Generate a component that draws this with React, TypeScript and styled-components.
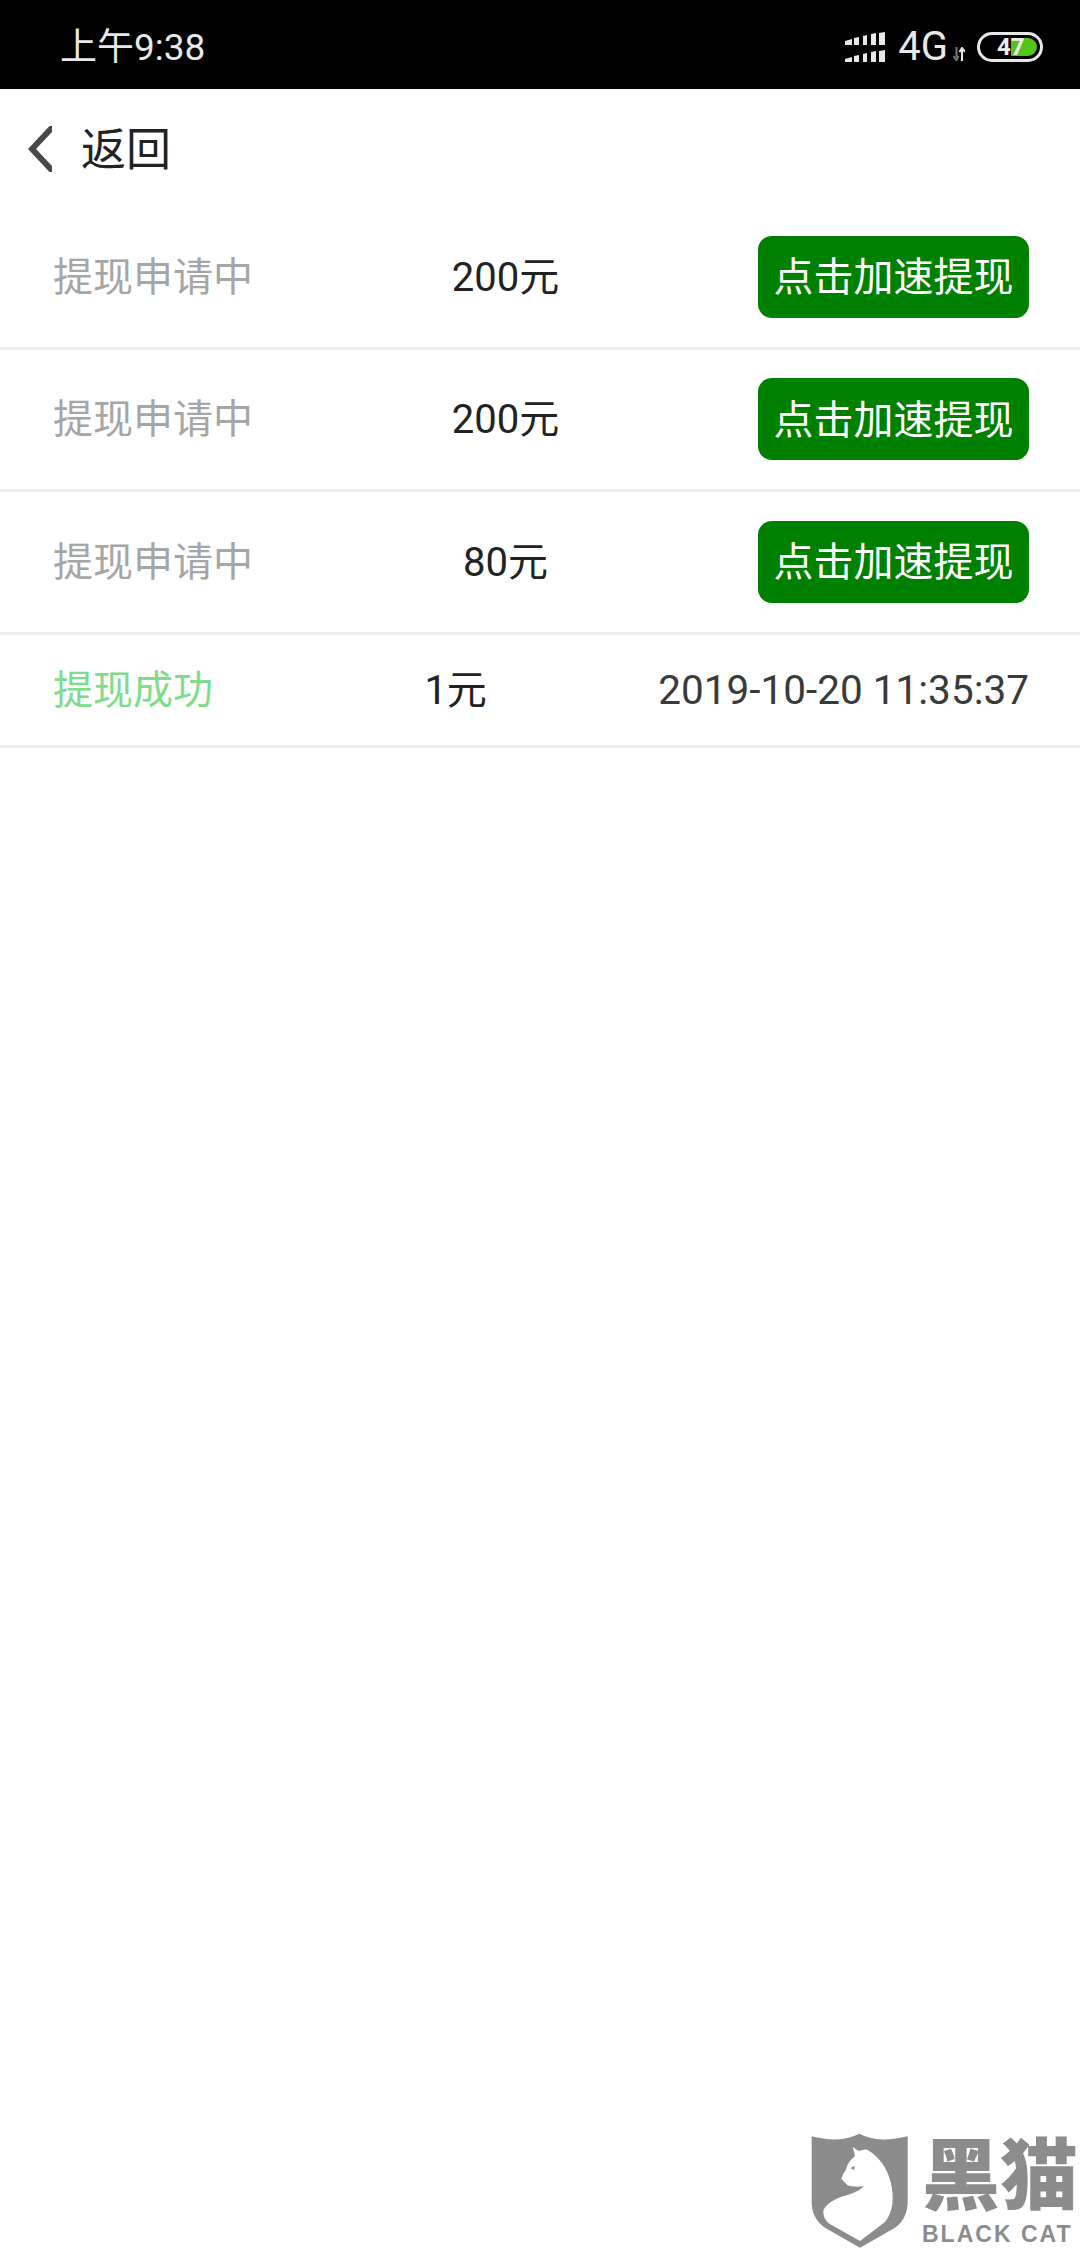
import React from 'react';
import styled, { createGlobalStyle } from 'styled-components';

const GlobalStyle = createGlobalStyle`
  html, body {
    margin: 0;
    padding: 0;
    background: #fff;
  }
  * {
    box-sizing: border-box;
  }
`;

const FONT = `Roboto, "Noto Sans CJK SC", sans-serif`;

const Page = styled.div`
  position: relative;
  width: 1080px;
  height: 2248px;
  overflow: hidden;
  background: #fff;
  font-family: ${FONT};
`;

// black system status bar
const StatusBar = styled.div`
  display: flex;
  align-items: center;
  justify-content: space-between;
  height: 89px;
  padding: 5px 37px 0 60px;
  background: #000;
  color: #e8e8e8;
`;

const Clock = styled.div`
  font-size: 37px;
  line-height: 1;
`;

const StatusIcons = styled.div`
  display: flex;
  align-items: center;
`;

const NetworkLabel = styled.span`
  font-size: 40px;
  line-height: 1;
  margin: 0 5px 0 13px;
`;

const Arrows = styled.svg`
  margin-top: 14px;
`;

const Battery = styled.div`
  position: relative;
  width: 66px;
  height: 30px;
  margin-left: 12px;
  padding: 3px;
  border: 3px solid #e8e8e8;
  border-radius: 15px;
  display: flex;
  justify-content: flex-end;
`;

const BatteryFill = styled.div`
  width: 26px;
  height: 100%;
  background: #52c41a;
  border-radius: 0 10px 10px 0;
`;

const BatteryLevel = styled.span`
  position: absolute;
  left: 17px;
  top: -3px;
  font-size: 24px;
  line-height: 30px;
  font-weight: 700;
  color: #ececec;
`;

const NavBar = styled.div`
  display: flex;
  align-items: center;
  height: 118px;
  padding: 2px 0 0 28px;
`;

const BackLabel = styled.span`
  margin-left: 29px;
  padding-top: 2px;
  font-size: 45px;
  line-height: 1;
  color: #222;
`;

const List = styled.div`
  display: flex;
  flex-direction: column;
`;

const Row = styled.div<{ $compact?: boolean }>`
  display: flex;
  align-items: center;
  justify-content: space-between;
  height: ${(p) => (p.$compact ? '113.5px' : '142.5px')};
  padding: 0 51px 0 53px;
  border-bottom: 3px solid #eee;
`;

const Status = styled.span<{ $done?: boolean }>`
  width: 200px;
  padding-top: 2px;
  font-size: 40px;
  line-height: 1;
  color: ${(p) => (p.$done ? '#7ddd8b' : '#a6a6a6')};
`;

const Amount = styled.span`
  padding-top: 2px;
  font-size: 40px;
  line-height: 1;
  color: #222;
`;

const Timestamp = styled.span`
  font-size: 40.500px;
  line-height: 1;
  color: #3a3a3a;
`;

const SpeedUpButton = styled.button`
  width: 271px;
  height: 82px;
  padding: 3px 0 0;
  border: 0;
  border-radius: 14px;
  background: #008000;
  color: #fff;
  font-family: ${FONT};
  font-size: 40px;
  line-height: 1;
`;

// watermark that sits over the page, bottom right
const Watermark = styled.div`
  position: absolute;
  left: 811px;
  top: 2133px;
  display: flex;
  gap: 14px;
  color: #8c8c8c;
`;

const WatermarkText = styled.div`
  display: flex;
  flex-direction: column;
  margin-top: 6px;
`;

const WatermarkName = styled.div`
  font-family: "Liberation Sans", "Noto Sans CJK SC", sans-serif;
  font-size: 78px;
  font-weight: 900;
  line-height: 76px;
  white-space: nowrap;
`;

const WatermarkLatin = styled.div`
  margin-top: 8px;
  font-family: "Liberation Sans", sans-serif;
  font-size: 23px;
  font-weight: 700;
  line-height: 22px;
  letter-spacing: 2px;
  white-space: nowrap;
`;

const SignalIcon = () => (
  <svg width="40" height="30" viewBox="0 0 40 30" fill="#e8e8e8">
    <path d="M0 9l7-2v6H0zM9 6l5-1v8H9zM18 4l4-1v10h-4zM26 2l5-1v12h-5zM34 1l6-1v13h-6z" />
    <path d="M0 27l7-2v5H0zM9 24l5-1v7H9zM18 22l4-1v9h-4zM26 20l5-1v11h-5zM34 19l6-1v12h-6z" />
  </svg>
);

const ArrowsIcon = () => (
  <Arrows width="12" height="14" viewBox="0 0 12 14" fill="none">
    <path d="M3.500 0v10M0.500 9l3 4 2-4" stroke="#777" strokeWidth="2" />
    <path d="M9 14V2M6.500 5L9 1l3 4" stroke="#e8e8e8" strokeWidth="2" />
  </Arrows>
);

const BackIcon = () => (
  <svg width="24" height="46" viewBox="0 0 24 46" fill="none">
    <path d="M27 -1.500 L4 23 L27 47.500" stroke="#484848" strokeWidth="6" />
  </svg>
);

const ShieldLogo = () => (
  <svg width="97" height="115" viewBox="153 68 291 345">
    <path
      fill="#8c8c8c"
      d="M155 78Q240 100 298 70Q355 100 443 78L443 280Q440 330 400 355L300 412L200 355Q158 330 155 280Z"
    />
    <path
      fill="#fff"
      d="M278 110L296 122Q312 116 322 118Q375 150 392 215Q410 290 375 335L300 392L208 340Q188 325 190 300Q205 270 260 255Q295 245 312 228Q280 232 262 225L244 205Q248 190 258 178Q262 155 285 137Z"
    />
    <path fill="#8c8c8c" d="M271 173L284 167L283 179Z" />
  </svg>
);

const rows = [
  { amount: '200元' },
  { amount: '200元' },
  { amount: '80元' },
];

const App: React.FC = () => {
  return (
    <Page>
      <GlobalStyle />
      <StatusBar>
        <Clock>上午9:38</Clock>
        <StatusIcons>
          <SignalIcon />
          <NetworkLabel>4G</NetworkLabel>
          <ArrowsIcon />
          <Battery>
            <BatteryFill />
            <BatteryLevel>47</BatteryLevel>
          </Battery>
        </StatusIcons>
      </StatusBar>

      <NavBar>
        <BackIcon />
        <BackLabel>返回</BackLabel>
      </NavBar>

      <List>
        {rows.map((row, i) => (
          <Row key={i}>
            <Status>提现申请中</Status>
            <Amount>{row.amount}</Amount>
            <SpeedUpButton>点击加速提现</SpeedUpButton>
          </Row>
        ))}
        <Row $compact>
          <Status $done>提现成功</Status>
          <Amount>1元</Amount>
          <Timestamp>2019-10-20 11:35:37</Timestamp>
        </Row>
      </List>

      <Watermark>
        <ShieldLogo />
        <WatermarkText>
          <WatermarkName>黑猫</WatermarkName>
          <WatermarkLatin>BLACK CAT</WatermarkLatin>
        </WatermarkText>
      </Watermark>
    </Page>
  );
};

export default App;
